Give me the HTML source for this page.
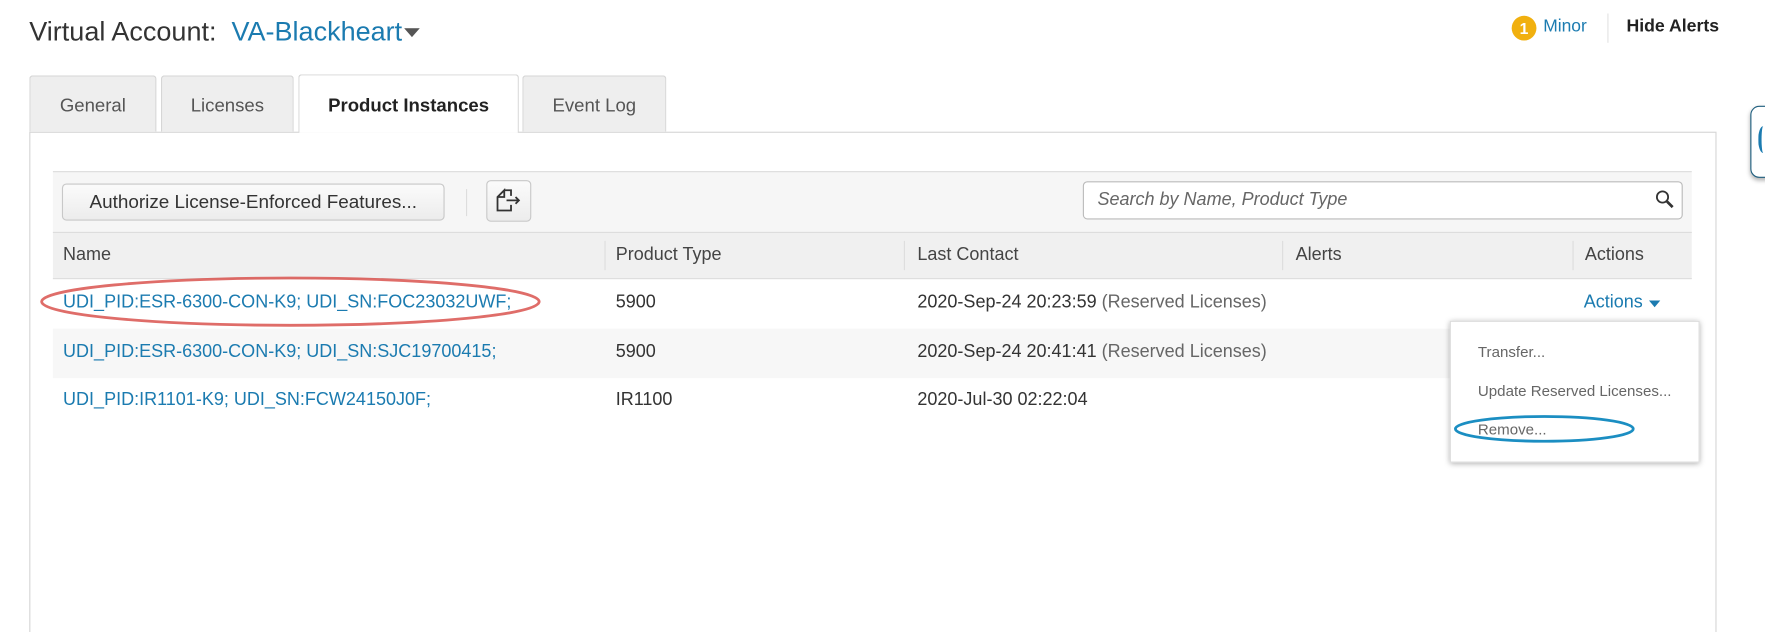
<!DOCTYPE html>
<html><head><meta charset="utf-8"><style>
html,body{margin:0;padding:0;background:#fff;overflow:hidden}
body{width:1765px;height:632px;position:relative;font-family:"Liberation Sans",Arial,sans-serif}
#w{position:absolute;left:0;top:0;width:1568px;height:562px;transform:scale(1.1256);transform-origin:0 0}
.a{position:absolute;white-space:nowrap}
.tab{position:absolute;top:67px;height:50px;background:#eeeeee;border:1px solid #d6d6d6;border-bottom:none;border-radius:3px 3px 0 0;box-sizing:border-box;font-size:16.5px;color:#555;text-align:center;line-height:52px}
.t{font-size:16px;color:#333}
.l{color:#1b7bb0}
.g{color:#666}
.hd{font-size:16px;color:#444}
.div{position:absolute;top:214px;width:1px;height:26px;background:#ddd}
</style></head><body><div id="w">
<div class="a" style="left:26px;top:15px;font-size:24px;color:#333">Virtual Account:&nbsp; <span class="l">VA-Blackheart</span></div>
<svg class="a" style="left:359px;top:25px" width="15" height="9"><path d="M0 0H14L7 8Z" fill="#555"/></svg>
<div class="a" style="left:1343px;top:14px;width:22px;height:22px;border-radius:50%;background:#f1b00f;color:#fff;font-size:14px;font-weight:bold;text-align:center;line-height:22px">1</div>
<div class="a l" style="left:1371px;top:15px;font-size:15.5px">Minor</div>
<div class="a" style="left:1428px;top:12px;width:1px;height:26px;background:#e3e3e3"></div>
<div class="a" style="left:1445px;top:15px;font-size:15.7px;font-weight:bold;color:#222">Hide Alerts</div>

<div class="a" style="left:26px;top:117px;width:1499px;height:460px;border:1px solid #d6d6d6;box-sizing:border-box"></div>
<div class="tab" style="left:26px;width:113px">General</div>
<div class="tab" style="left:143px;width:118px">Licenses</div>
<div class="tab" style="left:265px;width:196px;top:66px;height:52px;background:#fff;color:#222;font-weight:bold;line-height:54px">Product Instances</div>
<div class="tab" style="left:464px;width:128px">Event Log</div>

<div class="a" style="left:47px;top:152px;width:1456px;height:54px;background:#f6f6f6;border-top:1px solid #ddd;box-sizing:border-box"></div>
<div class="a" style="left:55px;top:163px;width:340px;height:33px;border:1px solid #c8c8c8;border-radius:4px;background:linear-gradient(#fbfbfb,#ececec);box-sizing:border-box;font-size:16.8px;color:#333;text-align:center;line-height:32px">Authorize License-Enforced Features...</div>
<div class="a" style="left:414px;top:168px;width:1px;height:24px;background:#ddd"></div>
<div class="a" style="left:432px;top:160px;width:40px;height:37px;border:1px solid #c8c8c8;border-radius:4px;background:linear-gradient(#fbfbfb,#ececec);box-sizing:border-box"></div>
<svg class="a" style="left:440px;top:166px" width="26" height="24" fill="none" stroke="#333" stroke-width="1.6"><path d="M8 3H14V8M14 16V21H2V9L8 3V9H2"/><path d="M10 12H21M18 9L21 12L18 15"/></svg>
<div class="a" style="left:962px;top:161px;width:533px;height:34px;border:1px solid #bbb;border-radius:4px;background:#fff;box-sizing:border-box"></div>
<div class="a" style="left:975px;top:169px;font-size:16px;font-style:italic;color:#666">Search by Name, Product Type</div>
<svg class="a" style="left:1470px;top:168px" width="20" height="20" fill="none" stroke="#333" stroke-width="1.6"><circle cx="7" cy="7" r="5"/><path d="M11 11L16 16" stroke-width="2.4"/></svg>

<div class="a" style="left:47px;top:206px;width:1456px;height:42px;background:#f0f0f0;border-top:1px solid #ddd;border-bottom:1px solid #ddd;box-sizing:border-box"></div>
<div class="div" style="left:537px"></div><div class="div" style="left:803px"></div><div class="div" style="left:1139px"></div><div class="div" style="left:1397px"></div>
<div class="a hd" style="left:56px;top:218px">Name</div>
<div class="a hd" style="left:547px;top:218px">Product Type</div>
<div class="a hd" style="left:815px;top:218px">Last Contact</div>
<div class="a hd" style="left:1151px;top:218px">Alerts</div>
<div class="a hd" style="left:1408px;top:218px">Actions</div>

<div class="a" style="left:47px;top:292px;width:1456px;height:44px;background:#f7f7f7"></div>
<div class="a t l" style="left:56px;top:260px">UDI_PID:ESR-6300-CON-K9; UDI_SN:FOC23032UWF;</div>
<div class="a t" style="left:547px;top:260px">5900</div>
<div class="a t" style="left:815px;top:260px">2020-Sep-24 20:23:59 <span class="g">(Reserved Licenses)</span></div>
<div class="a t l" style="left:1407px;top:260px">Actions</div>
<svg class="a" style="left:1465px;top:267px" width="11" height="7"><path d="M0 0H10L5 6Z" fill="#1b7bb0"/></svg>
<div class="a t l" style="left:56px;top:304px">UDI_PID:ESR-6300-CON-K9; UDI_SN:SJC19700415;</div>
<div class="a t" style="left:547px;top:304px">5900</div>
<div class="a t" style="left:815px;top:304px">2020-Sep-24 20:41:41 <span class="g">(Reserved Licenses)</span></div>
<div class="a t l" style="left:56px;top:347px">UDI_PID:IR1101-K9; UDI_SN:FCW24150J0F;</div>
<div class="a t" style="left:547px;top:347px">IR1100</div>
<div class="a t" style="left:815px;top:347px">2020-Jul-30 02:22:04</div>

<svg class="a" style="left:34px;top:245px" width="452" height="50"><ellipse cx="224" cy="23" rx="221" ry="21" fill="none" stroke="#d9534f" stroke-width="2.5" opacity=".85"/></svg>

<div class="a" style="left:1288px;top:285px;width:222px;height:126px;background:#fff;border:1px solid #ddd;box-shadow:0 1px 5px rgba(0,0,0,.35);box-sizing:border-box"></div>
<div class="a" style="left:1313px;top:305px;font-size:13.4px;color:#666">Transfer...</div>
<div class="a" style="left:1313px;top:340px;font-size:13.4px;color:#666">Update Reserved Licenses...</div>
<div class="a" style="left:1313px;top:374px;font-size:13.4px;color:#666">Remove...</div>
<svg class="a" style="left:1290px;top:366px" width="166" height="30"><ellipse cx="82" cy="15" rx="79" ry="11" fill="none" stroke="#1b8ec2" stroke-width="2.5"/></svg>

<div class="a" style="left:1555px;top:94px;width:40px;height:62px;border:1.5px solid #1f5f7f;border-radius:8px;box-shadow:0 2px 4px rgba(0,0,0,.3);background:#fff"></div>
<div class="a" style="left:1562px;top:112px;width:6px;height:24px;border-left:3px solid #1b7bb0;border-radius:50% 0 0 50%"></div>
</div></body></html>
